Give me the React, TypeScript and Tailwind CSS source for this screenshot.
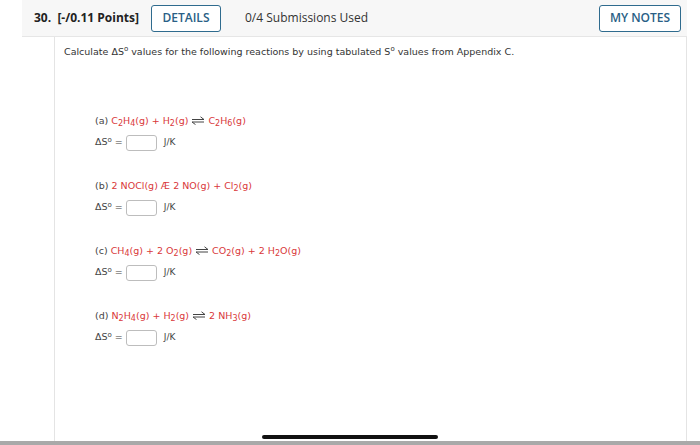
import React from "react";

// equilibrium harpoons
const Eq = () => (
	<svg width="14" height="9" viewBox="0 0 14 9" className="mx-[3px] inline-block relative top-[-1px]">
		<path d="M1 3.5H13L9.5 0.8" fill="none" stroke="#444" strokeWidth="1" />
		<path d="M13 6H1L4.5 8.6" fill="none" stroke="#444" strokeWidth="1" />
	</svg>
);

const Sub = ({ children }: { children: React.ReactNode }) => (
	<sub className="text-[8px] relative top-[2px] align-baseline">{children}</sub>
);

const Part = ({ label, children }: { label: string; children: React.ReactNode }) => (
	<div className="flex flex-col gap-[5px]">
		<div className="h-[16px] flex items-center">
			<span className="text-[#444]">({label})&nbsp;</span>
			<span className="text-[#d9383a]">{children}</span>
		</div>
		<div className="flex items-center h-[17px]">
			<span className="text-[#444]">
				ΔS<sup className="text-[7px]">o</sup>&nbsp;=&nbsp;
			</span>
			<span className="inline-block w-[31px] h-[16px] border border-[#bdbdbd] rounded-[3px] bg-white"></span>
			<span className="text-[#444] ml-[7px] text-[9px]">J/K</span>
		</div>
	</div>
);

const App: React.FC = () => {
	return (
		<div className="w-[700px] h-[445px] bg-white flex flex-col overflow-hidden relative">
			<div className="flex-1 flex flex-col pl-[22px] pr-[13px] min-h-0">
				{/* Header */}
				<div
					className="h-[37px] shrink-0 bg-[#f7f7f7] border-b border-[#e6e6e6] flex items-center pl-[12px] pr-[6px]"
					style={{ fontFamily: "'Open Sans', sans-serif" }}
				>
					<span className="text-[12px] font-bold text-[#222] w-[117px]">30.&nbsp; [-/0.11 Points]</span>
					<button className="h-[27px] w-[70px] border-[1.5px] border-[#2f6b8e] rounded-[3px] bg-white text-[#2a5f86] text-[12px] font-semibold">
						DETAILS
					</button>
					<span className="ml-[24px] text-[12px] text-[#333]">0/4 Submissions Used</span>
					<div className="flex-1"></div>
					<button className="h-[27px] w-[82px] border-[1.5px] border-[#2f6b8e] rounded-[3px] bg-white text-[#2a5f86] text-[12px] font-semibold">
						MY NOTES
					</button>
				</div>
				{/* Body */}
				<div
					className="flex-1 ml-[32px] border-l border-r border-[#e4e4e4] pl-[9px] pt-[9px] text-[9.5px] text-[#333]"
					style={{ fontFamily: "'DejaVu Sans', Verdana, sans-serif" }}
				>
					<div className="h-[12px] flex items-center">
						Calculate ΔS<sup className="text-[7px]">o</sup>&nbsp;values for the following reactions by using tabulated S<sup className="text-[7px]">o</sup>&nbsp;values from Appendix C.
					</div>
					<div className="pl-[31px] pt-[55px] flex flex-col gap-[27px]">
						<Part label="a">
							C<Sub>2</Sub>H<Sub>4</Sub>(g) + H<Sub>2</Sub>(g)
							<Eq />C<Sub>2</Sub>H<Sub>6</Sub>(g)
						</Part>
						<Part label="b">
							2 NOCl(g) Æ 2 NO(g) + Cl<Sub>2</Sub>(g)
						</Part>
						<Part label="c">
							CH<Sub>4</Sub>(g) + 2 O<Sub>2</Sub>(g)
							<Eq />CO<Sub>2</Sub>(g) + 2 H<Sub>2</Sub>O(g)
						</Part>
						<Part label="d">
							N<Sub>2</Sub>H<Sub>4</Sub>(g) + H<Sub>2</Sub>(g)
							<Eq />2 NH<Sub>3</Sub>(g)
						</Part>
					</div>
				</div>
			</div>
			<div className="h-[4px] shrink-0 bg-[#a9a9a9]"></div>
			<div className="absolute left-[262px] bottom-[6px] w-[176px] h-[4px] rounded-full bg-[#111]"></div>
		</div>
	);
};

export default App;
